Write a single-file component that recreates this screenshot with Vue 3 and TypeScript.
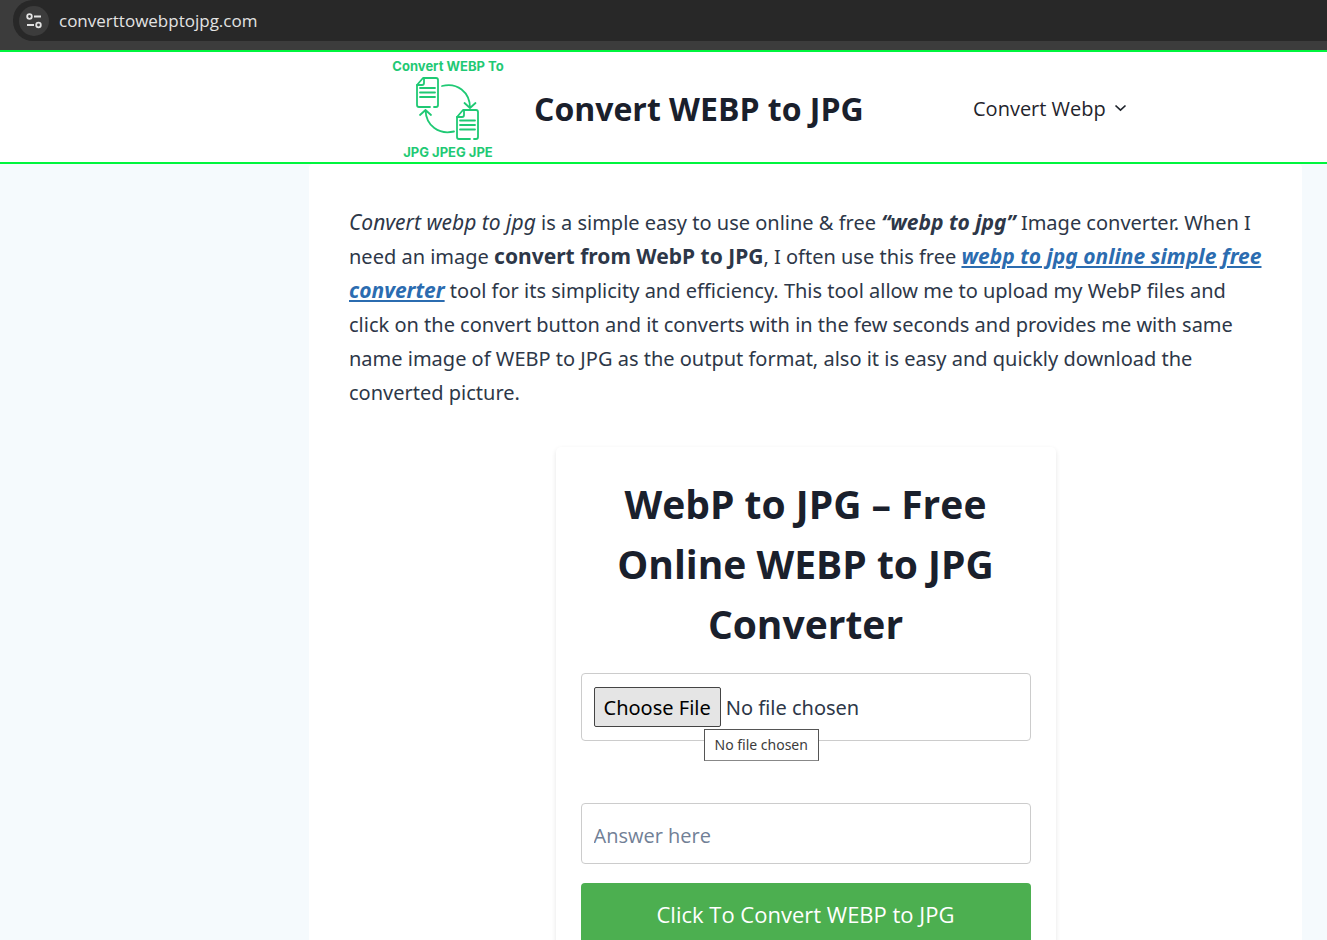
<script setup lang="ts">
import { ref } from 'vue'

const siteTitle = 'Convert WEBP to JPG'
const address = ref('converttowebptojpg.com')
const answer = ref('')
</script>

<template>
  <div class="page">
    <div class="browser-bar">
      <div class="address-bar">
        <button class="site-info" type="button" aria-label="View site information">
          <svg width="18" height="18" viewBox="0 0 18 18" fill="none" stroke="#e3e3e3" stroke-width="1.8">
            <circle cx="4.500" cy="4.500" r="2.3" />
            <path d="M9 4.500H16M2 13H9" />
            <circle cx="13.500" cy="13" r="2.3" />
          </svg>
        </button>
        <input v-model="address" class="address" type="text" aria-label="Address" />
      </div>
    </div>

    <header class="site-header">
      <a class="logo" href="#" aria-label="Home">
        <span>Convert WEBP To</span>
        <svg width="72" height="66" viewBox="0 0 72 66" fill="none" stroke="#1fc974" stroke-width="1.8" stroke-linecap="round" stroke-linejoin="round">
          <path d="M18 31H7Q5 31 5 29V9L11 2H24Q26 2 26 4V29Q26 31 24 31H22" />
          <path d="M12 2V7Q12 9 10 9H5" />
          <path d="M8 12H23M8 16.500H23M8 21H23" />
          <path d="M58 63H47Q45 63 45 61V41L51 34H64Q66 34 66 36V61Q66 63 64 63H62" />
          <path d="M52 34V39Q52 41 50 41H45" />
          <path d="M48 44.500H63M48 49H63M48 53.500H63" />
          <path d="M30 10C45 6 58 16 58 32M52.500 27L58 32L63.500 27" />
          <path d="M42 55.500C27 59 14 50 13.500 34M8 39L13.500 34L19 39" />
        </svg>
        <span>JPG JPEG JPE</span>
      </a>
      <a class="site-title" href="#">{{ siteTitle }}</a>
      <nav class="nav">
        <a href="#">Convert Webp
          <svg width="13" height="8" viewBox="0 0 13 8" fill="none" stroke="#1f242c" stroke-width="1.7">
            <path d="M1.500 1.500L6.500 6.200L11.500 1.500" />
          </svg>
        </a>
      </nav>
    </header>

    <main class="content">
      <p class="intro">
        <em>Convert webp to jpg</em> is a simple easy to use online &amp; free
        <strong><em>“webp to jpg”</em></strong> Image converter. When I need an image
        <strong>convert from WebP to JPG</strong>, I often use this free
        <a href="#">webp to jpg online simple free converter</a>
        tool for its simplicity and efficiency. This tool allow me to upload my WebP files and
        click on the convert button and it converts with in the few seconds and provides me with same
        name image of WEBP to JPG as the output format, also it is easy and quickly download the
        converted picture.
      </p>

      <form class="card" @submit.prevent>
        <h1>WebP to JPG – Free Online WEBP to JPG Converter</h1>
        <div class="file-field">
          <input class="file" type="file" accept="image/webp" aria-label="WebP image" />
          <span class="tooltip" role="tooltip">No file chosen</span>
        </div>
        <input v-model="answer" class="answer" type="text" placeholder="Answer here" aria-label="Answer" />
        <button class="convert" type="submit">Click To Convert WEBP to JPG</button>
      </form>
    </main>
  </div>
</template>

<style>
body {
  margin: 0;
}
</style>

<style scoped>
.page {
  box-sizing: border-box;
  height: 100vh;
  overflow: hidden;
  background: #f5fafd;
  color: #2d3748;
  font-family: "Noto Sans", sans-serif;
  font-size: 20px;
}

.page * {
  box-sizing: border-box;
}

.browser-bar {
  height: 50px;
  padding-left: 13px;
  background: #3c3c3c;
}

.address-bar {
  display: flex;
  align-items: center;
  gap: 10px;
  height: 41px;
  padding-left: 6px;
  border-radius: 20px 0 0 20px;
  background: #282828;
}

.site-info {
  display: grid;
  place-items: center;
  width: 30px;
  height: 30px;
  padding: 0;
  border: 0;
  border-radius: 50%;
  background: #3c3c3c;
}

.address {
  flex: 1;
  min-width: 0;
  padding: 0;
  border: 0;
  outline: 0;
  background: transparent;
  color: #e3e3e3;
  font: 17px "Open Sans", "Noto Sans", sans-serif;
}

.site-header {
  display: flex;
  align-items: center;
  height: 114px;
  padding-top: 2px;
  padding-left: 390px;
  border-top: 2px solid #00f53d;
  border-bottom: 2px solid #00f53d;
  background: #fff;
}

.logo {
  display: flex;
  flex-direction: column;
  align-items: center;
  width: 116px;
  padding-top: 2px;
  color: #1fc974;
  font: bold 13px/20px Inter, sans-serif;
  text-decoration: none;
  white-space: nowrap;
}

.site-title {
  width: 439px;
  padding-left: 28px;
  color: #1a202c;
  font-family: "Open Sans", "Noto Sans", sans-serif;
  font-size: 32px;
  font-weight: 700;
  text-decoration: none;
  white-space: nowrap;
}

.nav a {
  display: flex;
  align-items: center;
  gap: 8px;
  padding-left: 28px;
  color: #1f242c;
  font-family: "Open Sans", "Noto Sans", sans-serif;
  text-decoration: none;
  white-space: nowrap;
}

.content {
  margin: 0 25px 0 309px;
  padding: 42px 40px 0;
  border-radius: 4px 4px 0 0;
  background: #fff;
}

.intro {
  margin: 0 0 37px;
  line-height: 34px;
}

.intro em,
.intro strong,
.intro a {
  font-size: 21px;
  line-height: 24px;
}

.intro a {
  color: #2b6cb0;
  font-style: italic;
  font-weight: 700;
}

.card {
  max-width: 500px;
  margin: 0 auto;
  padding: 27px 25px 25px;
  border-radius: 5px;
  box-shadow: 0 2px 5px rgba(0, 0, 0, 0.1);
}

h1 {
  margin: 0 0 19px;
  color: #1a202c;
  font-family: "Open Sans", "Noto Sans", sans-serif;
  font-size: 39px;
  font-weight: 700;
  line-height: 60px;
  text-align: center;
}

.file-field {
  position: relative;
  margin-bottom: 62px;
}

.file,
.answer {
  display: block;
  width: 100%;
  padding: 13px 12px;
  border: 1px solid #ccc;
  border-radius: 4px;
  background: #fff;
  color: #2d3748;
  font: 20px "Noto Sans", sans-serif;
}

.file {
  height: 68px;
}

.file::file-selector-button {
  height: 40px;
  margin: 0 5px 0 0;
  padding: 1px 9px;
  border: 1px solid #444;
  border-radius: 2px;
  background: #e5e5e5;
  color: #000;
  font: inherit;
}

.tooltip {
  position: absolute;
  top: 56px;
  left: 123px;
  padding: 5px 10px;
  border: 1px solid #555;
  border-bottom-color: #888;
  background: #fff;
  color: #3c3c3c;
  font-size: 14px;
  line-height: 20px;
  white-space: nowrap;
}

.answer {
  height: 61px;
  margin-bottom: 19px;
  padding-top: 16px;
  font-family: "Open Sans", "Noto Sans", sans-serif;
}

.answer::placeholder {
  color: #718096;
  opacity: 1;
}

.convert {
  width: 100%;
  height: 62px;
  padding: 0;
  border: 0;
  border-radius: 4px;
  background: #4caf50;
  color: #fff;
  font: 22px "Open Sans", "Noto Sans", sans-serif;
}
</style>
